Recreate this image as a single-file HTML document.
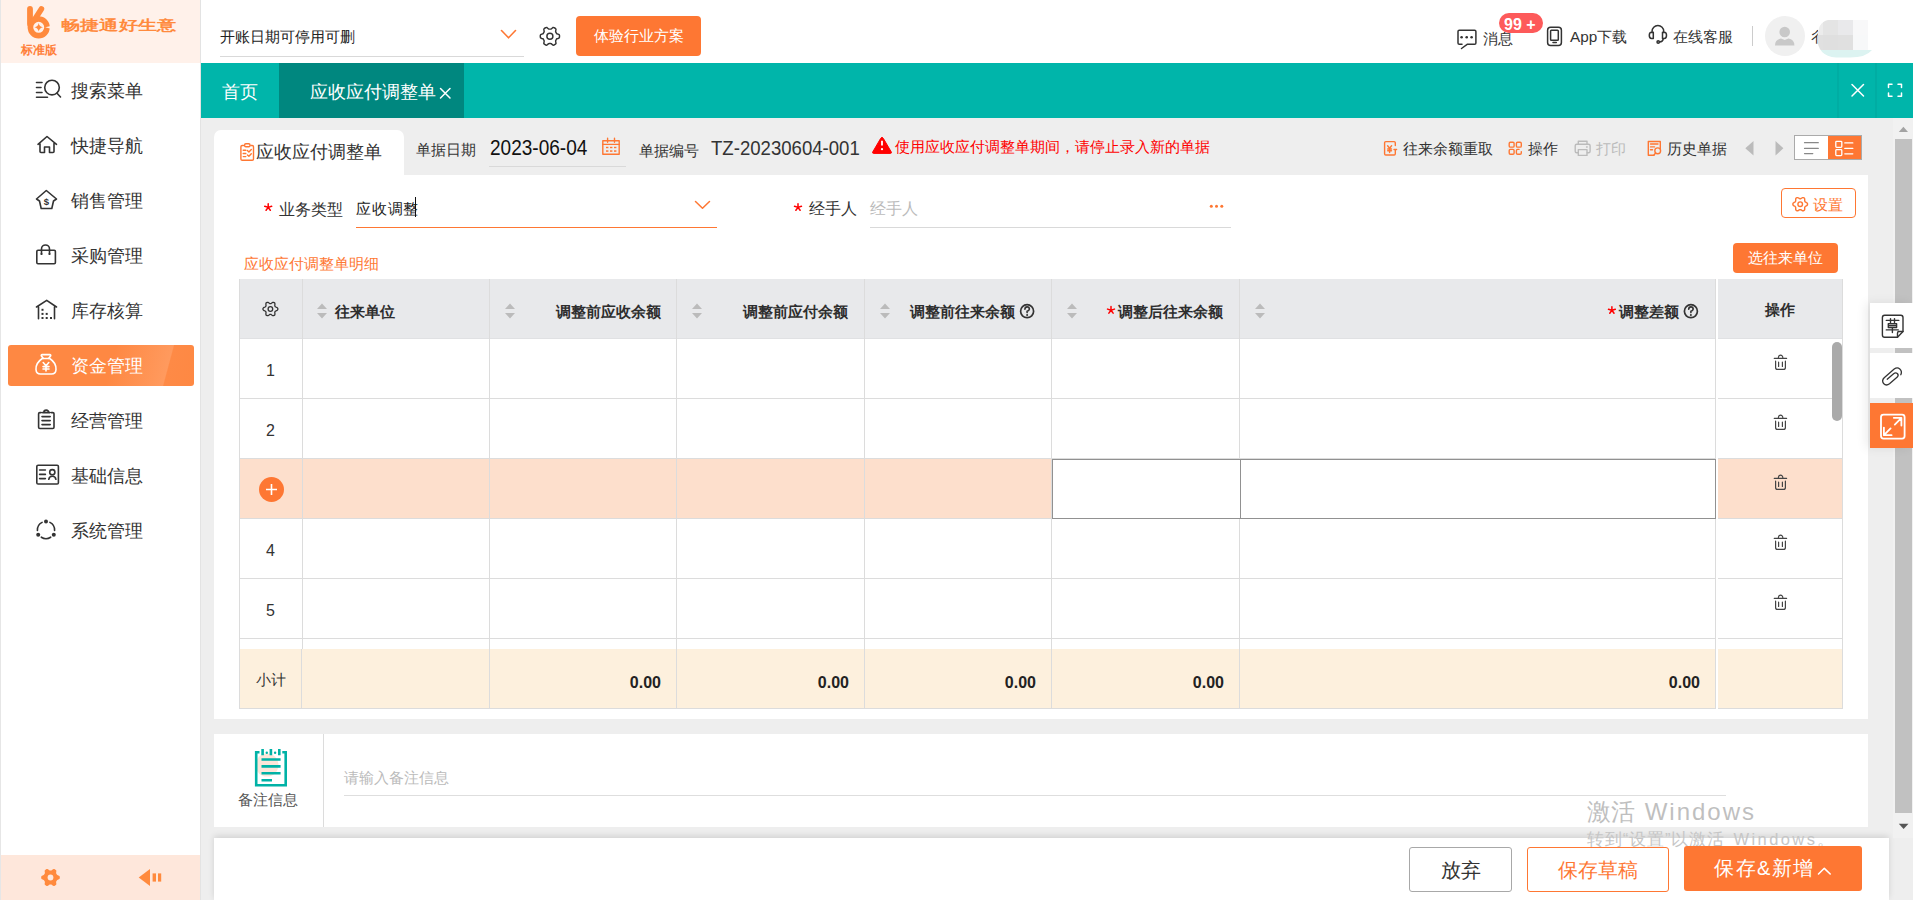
<!DOCTYPE html>
<html><head><meta charset="utf-8">
<style>
*{box-sizing:border-box;margin:0;padding:0}
html,body{width:1913px;height:900px;overflow:hidden}
body{position:relative;background:#eeeeee;font-family:"Liberation Sans",sans-serif;color:#333}
.a{position:absolute;white-space:nowrap}
svg{position:absolute;overflow:visible}
.ov{pointer-events:none}
/* sidebar */
#side{left:0;top:0;width:201px;height:900px;background:#fff;border-right:1px solid #e3e3e3;border-left:1px solid #e6e6e6}
#logo{left:1px;top:0;width:199px;height:63px;background:#fff1ea}
.mi{left:71px;font-size:18px;line-height:20px;color:#333;margin-top:1px}
#act{left:8px;top:345px;width:186px;height:41px;border-radius:3px;background:linear-gradient(105deg,#fe8843 0%,#fe8843 55%,#ff9a5e 84%,#fe8a46 84.6%,#fe8843 100%)}
#sbot{left:1px;top:855px;width:199px;height:45px;background:#fee7db}
/* header */
#hdr{left:201px;top:0;width:1712px;height:63px;background:#fff}
#tabs{left:201px;top:63px;width:1712px;height:55px;background:#00b5aa}
#atab{left:279px;top:63px;width:185px;height:55px;background:#00877f}
.tt{font-size:18px;line-height:20px;color:#fff;margin-top:1px}

.t15{font-size:15px;line-height:20px}
.lbl{font-size:16px;line-height:20px;color:#333}
.red{color:#f00}
.or{color:#fe7733}
.cw{background:#fff}
.th{font-size:15px;line-height:20px;font-weight:bold;color:#2e2e2e}
.vl{width:1px;background:#dcdcdc}
.hl{height:1px;background:#dcdcdc}
.num{font-size:16px;line-height:20px;font-weight:bold;color:#222;font-family:"Liberation Sans",sans-serif}
.btn{border-radius:4px;text-align:center}
</style></head><body>

<!-- SIDEBAR -->
<div class="a" id="side"></div>
<div class="a" id="logo"></div>
<!-- logo mark -->
<svg style="left:0;top:0" width="60" height="42" viewBox="0 0 60 42">
  <path d="M30 8.9V24" stroke="#ff8a3d" stroke-width="5.8" stroke-linecap="round" fill="none"/>
  <path d="M41.4 8.9L35 19" stroke="#ff8a3d" stroke-width="5.6" stroke-linecap="round" fill="none"/>
  <circle cx="38.7" cy="27.3" r="8.3" stroke="#ff8a3d" stroke-width="5.6" fill="none"/>
  <path d="M45.2 27.3L50.8 25.9V28.7Z" fill="#fff1ea"/>
  <path d="M38.7 23Q39.3 26.7 43 27.3Q39.3 27.9 38.7 31.6Q38.1 27.9 34.4 27.3Q38.1 26.7 38.7 23Z" fill="#ff8a3d"/>
</svg>
<div class="a" style="left:61px;top:16px;font-size:14px;line-height:18px;font-weight:bold;color:#ff8a3d;transform-origin:0 0;transform:scaleX(1.37)">畅捷通好生意</div>
<div class="a" style="left:21px;top:42px;font-size:12px;line-height:16px;font-weight:bold;color:#ff7f3a">标准版</div>

<!-- menu -->
<div class="a" id="act"></div>
<div class="a mi" style="top:80px">搜索菜单</div>
<div class="a mi" style="top:135px">快捷导航</div>
<div class="a mi" style="top:190px">销售管理</div>
<div class="a mi" style="top:245px">采购管理</div>
<div class="a mi" style="top:300px">库存核算</div>
<div class="a mi" style="top:355px;color:#fff">资金管理</div>
<div class="a mi" style="top:410px">经营管理</div>
<div class="a mi" style="top:465px">基础信息</div>
<div class="a mi" style="top:520px">系统管理</div>

<div class="a" id="sbot"></div>

<!-- HEADER -->
<div class="a" id="hdr"></div>
<div class="a" style="left:220px;top:27px;font-size:15px;line-height:20px;color:#222">开账日期可停用可删</div>
<div class="a" style="left:220px;top:56px;width:304px;height:1px;background:#d9d9d9"></div>
<div class="a" style="left:576px;top:16px;width:125px;height:40px;border-radius:4px;background:#fe7733"></div>
<div class="a" style="left:576px;top:16px;width:125px;line-height:40px;text-align:center;font-size:15px;color:#fff">体验行业方案</div>

<div class="a" style="left:1483px;top:29px;font-size:15px;line-height:20px;color:#333">消息</div>
<div class="a" style="left:1499px;top:13px;width:44px;height:20px;border-radius:10px;background:#fd5a5a"></div>
<div class="a" style="left:1504px;top:15px;line-height:20px;font-size:16px;font-weight:bold;color:#fff">99 +</div>
<div class="a" style="left:1570px;top:27px;font-size:15.3px;line-height:20px;color:#333">App下载</div>
<div class="a" style="left:1673px;top:27px;font-size:15px;line-height:20px;color:#333">在线客服</div>
<div class="a" style="left:1752px;top:26px;width:1px;height:20px;background:#ccc"></div>
<div class="a" style="left:1765px;top:16px;width:40px;height:40px;border-radius:20px;background:#f0f0f0"></div>
<div class="a" style="left:1811px;top:27px;width:7px;overflow:hidden;font-size:15px;line-height:20px;color:#333">彳</div>

<!-- TABS -->
<div class="a" id="tabs"></div>
<div class="a" id="atab"></div>
<div class="a tt" style="left:222px;top:81px">首页</div>
<div class="a tt" style="left:310px;top:81px;font-size:17.6px">应收应付调整单</div>


<!-- CONTENT -->
<div class="a" style="left:214px;top:130px;width:190px;height:46px;background:#fff;border-radius:7px 7px 0 0"></div>
<div class="a" style="left:214px;top:175px;width:1654px;height:544px;background:#fff"></div>
<div class="a" style="left:256px;top:142px;font-size:17.7px;line-height:20px;color:#333">应收应付调整单</div>
<div class="a t15" style="left:416px;top:140px;color:#333">单据日期</div>
<div class="a" style="left:490px;top:137px;font-size:21.5px;line-height:22px;color:#111;transform-origin:0 0;transform:scaleX(0.885)">2023-06-04</div>
<div class="a hl" style="left:489px;top:166px;width:137px;background:#d9d9d9"></div>
<div class="a t15" style="left:639px;top:141px;color:#333">单据编号</div>
<div class="a" style="left:711px;top:137px;font-size:21px;line-height:22px;color:#333;transform-origin:0 0;transform:scaleX(0.885)">TZ-20230604-001</div>
<div class="a t15 red" style="left:895px;top:137px">使用应收应付调整单期间，请停止录入新的单据</div>
<div class="a t15" style="left:1403px;top:139px;color:#333">往来余额重取</div>
<div class="a t15" style="left:1528px;top:139px;color:#333">操作</div>
<div class="a t15" style="left:1596px;top:139px;color:#bbb">打印</div>
<div class="a t15" style="left:1667px;top:139px;color:#333">历史单据</div>
<div class="a" style="left:1794px;top:135px;width:68px;height:25px;border:1px solid #aaa;background:#fff"></div>
<div class="a" style="left:1828px;top:136px;width:33px;height:23px;background:#fe7733"></div>

<!-- form row -->
<div class="a lbl" style="left:279px;top:200px">业务类型</div>
<div class="a" style="left:356px;top:199px;font-size:15.3px;line-height:20px;color:#222;letter-spacing:0.8px">应收调整</div>
<div class="a" style="left:415px;top:197px;width:1px;height:20px;background:#111"></div>
<div class="a hl" style="left:356px;top:227px;width:361px;background:#fe7733"></div>
<div class="a lbl" style="left:809px;top:199px">经手人</div>
<div class="a" style="left:870px;top:199px;font-size:15.5px;line-height:20px;color:#bbb">经手人</div>
<div class="a hl" style="left:870px;top:227px;width:361px;background:#d9d9d9"></div>
<div class="a btn" style="left:1781px;top:188px;width:75px;height:30px;border:1px solid #fe7733"></div>
<div class="a or" style="left:1813px;top:195px;font-size:15px;line-height:20px">设置</div>

<div class="a t15 or" style="left:244px;top:254px">应收应付调整单明细</div>
<div class="a btn" style="left:1733px;top:243px;width:105px;height:30px;background:#fe7733"></div>
<div class="a t15" style="left:1733px;top:248px;width:105px;text-align:center;color:#fff">选往来单位</div>
<!-- TABLE -->
<div class="a" style="left:239px;top:279px;width:1604px;height:60px;background:#e8e9eb"></div>
<div class="a" style="left:240px;top:459px;width:1475px;height:59px;background:#fddfcc"></div>
<div class="a" style="left:1718px;top:459px;width:124px;height:59px;background:#fddfcc"></div>
<div class="a" style="left:239px;top:649px;width:1477px;height:60px;background:#fdf0dd"></div>
<div class="a" style="left:1718px;top:649px;width:125px;height:60px;background:#fdf0dd"></div>
<div class="a hl" style="left:239px;top:338px;width:1604px;background:#e0e1e3"></div>
<div class="a hl" style="left:239px;top:398px;width:1477px"></div>
<div class="a hl" style="left:1718px;top:398px;width:125px"></div>
<div class="a hl" style="left:239px;top:458px;width:1477px"></div>
<div class="a hl" style="left:1718px;top:458px;width:125px"></div>
<div class="a hl" style="left:239px;top:518px;width:1477px"></div>
<div class="a hl" style="left:1718px;top:518px;width:125px"></div>
<div class="a hl" style="left:239px;top:578px;width:1477px"></div>
<div class="a hl" style="left:1718px;top:578px;width:125px"></div>
<div class="a hl" style="left:239px;top:638px;width:1477px"></div>
<div class="a hl" style="left:1718px;top:638px;width:125px"></div>
<div class="a hl" style="left:239px;top:708px;width:1477px"></div>
<div class="a hl" style="left:1718px;top:708px;width:125px"></div>
<div class="a vl" style="left:239px;top:279px;height:430px"></div>
<div class="a vl" style="left:302px;top:279px;height:370px"></div><div class="a vl" style="left:301px;top:649px;height:60px"></div>
<div class="a vl" style="left:489px;top:279px;height:430px"></div>
<div class="a vl" style="left:676px;top:279px;height:430px"></div>
<div class="a vl" style="left:864px;top:279px;height:430px"></div>
<div class="a vl" style="left:1051px;top:279px;height:430px"></div>
<div class="a vl" style="left:1239px;top:279px;height:430px"></div>
<div class="a vl" style="left:1715px;top:279px;height:430px"></div>
<div class="a vl" style="left:1842px;top:279px;height:430px"></div>
<div class="a" style="left:1716px;top:279px;width:2px;height:430px;background:#fff"></div>
<div class="a" style="left:1052px;top:459px;width:189px;height:60px;border:1px solid #919191;background:#fff"></div>
<div class="a" style="left:1241px;top:459px;width:475px;height:60px;border:1px solid #919191;border-left:none;background:#fff"></div>
<div class="a" style="left:239px;top:361px;width:63px;text-align:center;font-size:16px;line-height:20px;color:#333">1</div>
<div class="a" style="left:239px;top:421px;width:63px;text-align:center;font-size:16px;line-height:20px;color:#333">2</div>
<div class="a" style="left:239px;top:541px;width:63px;text-align:center;font-size:16px;line-height:20px;color:#333">4</div>
<div class="a" style="left:239px;top:601px;width:63px;text-align:center;font-size:16px;line-height:20px;color:#333">5</div>
<div class="a" style="left:239px;top:670px;width:63px;text-align:center;font-size:15px;line-height:20px;color:#333">小计</div>
<div class="a" style="left:259px;top:477px;width:25px;height:25px;border-radius:13px;background:#fe7733"></div>
<div class="a th" style="left:335px;top:302px">往来单位</div>
<div class="a th" style="left:489px;top:302px;width:172px;text-align:right">调整前应收余额</div>
<div class="a th" style="left:676px;top:302px;width:172px;text-align:right">调整前应付余额</div>
<div class="a th" style="left:864px;top:302px;width:151px;text-align:right">调整前往来余额</div>
<div class="a th" style="left:1051px;top:302px;width:172px;text-align:right">调整后往来余额</div>
<div class="a th" style="left:1239px;top:302px;width:460px;text-align:right;padding-right:20px">调整差额</div>
<div class="a th" style="left:1718px;top:300px;width:124px;text-align:center">操作</div>
<div class="a num" style="left:489px;top:673px;width:187px;text-align:right;padding-right:15px">0.00</div>
<div class="a num" style="left:676px;top:673px;width:188px;text-align:right;padding-right:15px">0.00</div>
<div class="a num" style="left:864px;top:673px;width:187px;text-align:right;padding-right:15px">0.00</div>
<div class="a num" style="left:1051px;top:673px;width:188px;text-align:right;padding-right:15px">0.00</div>
<div class="a num" style="left:1239px;top:673px;width:476px;text-align:right;padding-right:15px">0.00</div>
<!-- REMARK -->
<div class="a" style="left:214px;top:734px;width:1654px;height:93px;background:#fff"></div>
<div class="a vl" style="left:323px;top:734px;height:93px"></div>
<div class="a" style="left:238px;top:790px;font-size:15px;line-height:20px;color:#555">备注信息</div>
<div class="a" style="left:344px;top:768px;font-size:15px;line-height:20px;color:#bbb">请输入备注信息</div>
<div class="a hl" style="left:344px;top:795px;width:1382px;background:#dedede"></div>
<!-- FOOTER -->
<div class="a" style="left:214px;top:838px;width:1675px;height:62px;background:#fff;box-shadow:0 -2px 6px rgba(0,0,0,0.12)"></div>
<div class="a" style="left:1587px;top:797px;font-size:24px;line-height:30px;color:#bfbfbf">激活 <span style="letter-spacing:2px;margin-left:3px">Windows</span></div>
<div class="a" style="left:1587px;top:828px;font-size:16.5px;line-height:22px;color:#c6c6c6;letter-spacing:0.9px">转到“设置”以激活 <span style="letter-spacing:2.4px;margin-left:3px">Windows</span>。</div>
<div class="a btn" style="left:1409px;top:847px;width:103px;height:45px;border:1px solid #a8a8a8;border-radius:3px"></div>
<div class="a" style="left:1409px;top:859px;width:103px;text-align:center;font-size:20px;line-height:22px;color:#333">放弃</div>
<div class="a btn" style="left:1527px;top:847px;width:142px;height:45px;border:1px solid #fe7733;border-radius:3px"></div>
<div class="a" style="left:1527px;top:859px;width:142px;text-align:center;font-size:20px;line-height:22px;color:#fe7733">保存草稿</div>
<div class="a btn" style="left:1684px;top:846px;width:178px;height:45px;background:#fe7733;border-radius:3px"></div>
<div class="a" style="left:1714px;top:857px;font-size:20px;line-height:22px;color:#fff;letter-spacing:1.5px">保存&amp;新增</div>
<div class="a" style="left:1893px;top:118px;width:20px;height:720px;background:#f1f1f1"></div>
<div class="a" style="left:1895px;top:139px;width:17px;height:674px;background:#c1c1c1"></div>
<div class="a" style="left:1870px;top:303px;width:43px;height:145px;box-shadow:-4px 0 10px rgba(0,0,0,0.08)"></div>
<div class="a" style="left:1870px;top:303px;width:43px;height:45px;background:#fff"></div>
<div class="a" style="left:1870px;top:353px;width:43px;height:45px;background:#fff"></div>
<div class="a" style="left:1870px;top:403px;width:43px;height:45px;background:#fe7733"></div>
<div class="a" style="left:1832px;top:342px;width:10px;height:79px;border-radius:5px;background:#aaa"></div>
<!--OVL--><svg class="ov" style="left:0;top:0" width="1913" height="900" viewBox="0 0 1913 900" fill="none" stroke-linecap="round" stroke-linejoin="round">
<g stroke="#333" stroke-width="1.6">
<path d="M36.5 82.5H42M36.5 87.5H41M36.5 92.5H42M36.5 97.3H47.5"/><circle cx="52" cy="87.6" r="7.3"/><path d="M57 93.2L60.5 97"/>
<path transform="translate(0,55)" d="M38 89.3L47 81.5L56.5 89.3M40 88.5V96.5Q40 97.5 41 97.5H44.5V92H49.5V97.5H53Q54 97.5 54 96.5V88.5"/>
<path transform="translate(0,110)" d="M46.3 80.5L56.5 89L53.5 91L51.8 98.5H41.2L39.5 91L36.5 89Z"/>
</g>
<text x="46.3" y="205.2" font-size="9.5" font-weight="bold" fill="#333" text-anchor="middle" font-family="Liberation Sans">$</text>
<g stroke="#333" stroke-width="1.6">
<rect x="36.8" y="250.2" width="18.6" height="13.6" rx="1.2"/><path d="M41.5 254V249A4 4 0 0 1 49.5 249V254"/>
<path d="M36.5 307L46.7 300.3L56.5 307M38.5 307V318.8M54.5 307V318.8"/>
</g>
<g fill="#333"><circle cx="41.5" cy="254" r="1.1"/><circle cx="49.5" cy="254" r="1.1"/>
<rect x="41.5" y="308.8" width="2" height="2"/>
<rect x="41.5" y="312.9" width="2" height="2"/>
<rect x="45.7" y="312.9" width="2" height="2"/>
<rect x="41.5" y="317.0" width="2" height="2"/>
<rect x="45.7" y="317.0" width="2" height="2"/>
<rect x="50.0" y="317.0" width="2" height="2"/>
</g>
<g stroke="#fff" stroke-width="1.6"><path d="M43.2 358.3L41.3 355.8Q41 354.6 42.2 354.6H49.8Q51 354.6 50.7 355.8L48.8 358.3"/><path d="M42.3 358.5H49.7Q56.3 362.8 56 369.5Q55.8 374 51.5 374H40.5Q36.2 374 36 369.5Q35.7 362.8 42.3 358.5Z"/><path d="M43.2 362.5L46 365.8L48.8 362.5M46 365.8V371M43 366.6H49M43 369H49"/></g>
<g stroke="#333" stroke-width="1.6">
<path d="M41.2 412.6H39.8Q38.6 412.6 38.6 413.8V427.3Q38.6 428.5 39.8 428.5H52.8Q54 428.5 54 427.3V413.8Q54 412.6 52.8 412.6H51.4M42.5 412.6H50M43.8 412.6A2.5 2.5 0 0 1 48.8 412.6M42 416.6H50.2M42 420.6H50.2M42 424.6H50.2"/>
<rect x="36.8" y="465.2" width="21.6" height="18.8" rx="1.3"/><path d="M39.6 470H45.4M39.6 474.4H45.4M39.6 478.6H45.4"/><circle cx="52.3" cy="472.2" r="2.6"/><path d="M48.8 479.3A3.6 3.6 0 0 1 55.9 479.3"/>
<path d="M49.90 522.34 A8.6 8.6 0 0 1 54.59 530.45 M50.68 537.21 A8.6 8.6 0 0 1 41.32 537.21 M37.41 530.45 A8.6 8.6 0 0 1 42.10 522.34"/>
</g>
<g fill="#333"><circle cx="46" cy="521.5" r="2"/><circle cx="38.2" cy="534.7" r="2"/><circle cx="53.8" cy="534.7" r="2"/></g>
<path d="M59.8 877.5L59.8 878.3L59.4 879.1L58.4 879.6L57.3 880.0L56.8 880.5L56.6 881.0L56.2 881.5L56.1 882.2L56.3 883.3L56.3 884.4L55.8 885.1L55.1 885.6L54.4 885.9L53.6 886.0L52.6 885.4L51.8 884.7L51.1 884.5L50.5 884.5L49.9 884.5L49.2 884.7L48.4 885.4L47.4 886.0L46.6 885.9L45.9 885.6L45.2 885.1L44.7 884.4L44.7 883.3L44.9 882.2L44.8 881.5L44.4 881.0L44.2 880.5L43.7 880.0L42.6 879.6L41.6 879.1L41.2 878.3L41.2 877.5L41.2 876.7L41.6 875.9L42.6 875.4L43.7 875.0L44.2 874.5L44.4 874.0L44.8 873.5L44.9 872.8L44.7 871.7L44.7 870.6L45.2 869.9L45.8 869.4L46.6 869.1L47.4 869.0L48.4 869.6L49.2 870.3L49.9 870.5L50.5 870.5L51.1 870.5L51.8 870.3L52.6 869.6L53.6 869.0L54.4 869.1L55.1 869.4L55.8 869.9L56.3 870.6L56.3 871.7L56.1 872.8L56.2 873.5L56.6 874.0L56.8 874.5L57.3 875.0L58.4 875.4L59.4 875.9L59.8 876.7Z" fill="#ff8a3d"/><circle cx="50.5" cy="877.5" r="2.9" fill="#fee7db"/>
<path d="M150 869L138.7 877.5L150 886Z" fill="#ff8a3d"/><rect x="152.6" y="873.4" width="3.4" height="8.2" fill="#ff8a3d"/><rect x="158" y="873.4" width="3.2" height="8.2" fill="#ff8a3d"/>
<path d="M501.5 30.5L508.5 37.8L515.5 30.5" stroke="#fe7733" stroke-width="1.6"/>
<path d="M559.5 36.3L559.5 37.1L559.2 37.9L558.0 38.5L556.8 38.8L556.4 39.3L556.1 39.9L555.8 40.4L555.6 41.0L555.8 42.2L556.0 43.5L555.4 44.2L554.7 44.6L554.0 45.0L553.1 45.2L552.1 44.4L551.2 43.6L550.5 43.5L549.9 43.5L549.3 43.5L548.6 43.6L547.7 44.4L546.7 45.2L545.8 45.0L545.1 44.6L544.4 44.2L543.8 43.5L544.0 42.2L544.2 41.0L544.0 40.4L543.7 39.9L543.4 39.3L543.0 38.8L541.8 38.5L540.6 37.9L540.3 37.1L540.3 36.3L540.3 35.5L540.6 34.7L541.8 34.1L543.0 33.8L543.4 33.3L543.7 32.7L544.0 32.2L544.2 31.6L544.0 30.4L543.8 29.1L544.4 28.4L545.1 28.0L545.8 27.6L546.7 27.4L547.7 28.2L548.6 29.0L549.3 29.1L549.9 29.1L550.5 29.1L551.2 29.0L552.1 28.2L553.1 27.4L554.0 27.6L554.7 28.0L555.4 28.4L556.0 29.1L555.8 30.4L555.6 31.6L555.8 32.2L556.1 32.7L556.4 33.3L556.8 33.8L558.0 34.1L559.2 34.7L559.5 35.5Z" stroke="#333" stroke-width="1.45"/><circle cx="549.9" cy="36.3" r="3.0" stroke="#333" stroke-width="1.45"/>
<g stroke="#333" stroke-width="1.5"><path d="M1462 44.2H1459.3Q1458 44.2 1458 42.9V31.5Q1458 30.2 1459.3 30.2H1474.6Q1475.9 30.2 1475.9 31.5V42.9Q1475.9 44.2 1474.6 44.2H1467.5L1461.5 48.5"/>
<rect x="1547.6" y="27.2" width="13.8" height="18.4" rx="3"/><rect x="1550.6" y="30.3" width="7.7" height="10" rx="0.8"/><path d="M1553 42.6H1556.3"/>
<path d="M1652 32.5V31.5A5.9 5.9 0 0 1 1663.8 31.5V32.5M1651.5 32.2H1653.3V38.5H1651.5Q1649.3 38.5 1649.3 35.3Q1649.3 32.2 1651.5 32.2ZM1664.3 32.2H1662.5V38.5H1664.3Q1666.5 38.5 1666.5 35.3Q1666.5 32.2 1664.3 32.2ZM1663.3 38.8Q1662.8 41.8 1659.5 42"/><circle cx="1658.2" cy="42" r="1.2"/>
</g>
<g fill="#333"><circle cx="1461.6" cy="37.3" r="1.3"/><circle cx="1466.7" cy="37.3" r="1.3"/><circle cx="1471.6" cy="37.3" r="1.3"/></g>
<g fill="#c8c8c8"><circle cx="1784.7" cy="32" r="5.3"/><path d="M1775 45.5Q1775 39.5 1781 38.5L1784.7 40L1788.4 38.5Q1794.4 39.5 1794.4 45.5Z"/></g>
<g stroke="none"><clipPath id="mc"><path d="M1828 20H1868V50H1872Q1866 57.5 1850 57.5H1836Q1817.5 56 1817.5 38.5Q1817.5 22 1828 20Z"/></clipPath><g clip-path="url(#mc)"><rect x="1815" y="20" width="8" height="15" fill="#ececec"/><rect x="1815" y="35" width="8" height="15" fill="#e0e0e0"/><rect x="1823" y="20" width="15" height="15" fill="#e4e4e4"/><rect x="1838" y="20" width="15" height="15" fill="#e9e9eb"/><rect x="1853" y="20" width="15" height="15" fill="#f8f8f9"/><rect x="1823" y="35" width="15" height="15" fill="#dfdfdf"/><rect x="1838" y="35" width="15" height="15" fill="#e0e0e0"/><rect x="1853" y="35" width="15" height="15" fill="#f7f8f9"/><rect x="1815" y="50" width="60" height="10" fill="#dcf3f1"/></g></g>
<g stroke="#fff" stroke-width="1.5"><path d="M440.5 88.5L450 98M450 88.5L440.5 98"/><path d="M1852 84.5L1863.5 96M1863.5 84.5L1852 96"/><path d="M1888.5 87.5V84.2H1892M1898 84.2H1901.5V87.5M1901.5 93V96.3H1898M1892 96.3H1888.5V93"/></g>
<g stroke="none"><rect x="1837" y="63" width="2" height="55" fill="#00a99e" opacity="0.6"/><rect x="1875" y="63" width="2" height="55" fill="#00a99e" opacity="0.6"/></g>
<g stroke="#fe7733" stroke-width="1.4">
<path d="M243.5 145.5H242.2Q240.9 145.5 240.9 146.8V158.9Q240.9 160.2 242.2 160.2H252.2Q253.5 160.2 253.5 158.9V146.8Q253.5 145.5 252.2 145.5H250.9"/><rect x="244.6" y="143.8" width="5.4" height="3" rx="1.2"/><path d="M243.2 150.3H245.8M243.2 153.5H245.8M243.2 156.6H245.8M247.4 150.6L248.9 152L251.3 149.5M247.4 154.9L248.9 156.3L251.3 153.8"/>
<rect x="602.8" y="140.8" width="16.4" height="13.5"/><path d="M602.8 144.4H619.2M607.6 138.3V142.3M614.5 138.3V142.3"/></g><g fill="#fe7733"><rect x="606" y="146.8" width="2.4" height="1.4"/><rect x="610" y="146.8" width="2.4" height="1.4"/><rect x="614" y="146.8" width="2.4" height="1.4"/><rect x="606" y="150.3" width="2.4" height="1.5"/><rect x="610" y="150.3" width="2.4" height="1.5"/><rect x="614" y="150.3" width="2.4" height="1.5"/></g><g stroke="#fe7733" stroke-width="1.4">
<path d="M1395.3 145.6V142.8Q1395.3 141.6 1394.1 141.6H1385.8Q1384.6 141.6 1384.6 142.8V153.8Q1384.6 155 1385.8 155H1394.1Q1395.3 155 1395.3 153.8V149.8M1394 149.5H1396.6M1387.6 145.8L1389.6 148.3L1391.6 145.8M1389.6 148.3V152.6M1387.7 149H1391.5M1387.7 150.8H1391.5"/>
<rect x="1509.2" y="142.2" width="4.9" height="4.9" rx="1.2"/><rect x="1516.4" y="142.2" width="4.9" height="4.9" rx="1.2"/><rect x="1509.2" y="149.4" width="4.9" height="4.9" rx="1.2"/><path d="M1521.3 151.6V153Q1521.3 154.3 1520 154.3H1517.7Q1516.4 154.3 1516.4 153V150.7Q1516.4 149.4 1517.7 149.4H1519"/>
<path d="M1654 155.3H1648.3V141.5H1660.3V149M1650.5 144H1658M1650.5 146.9H1654.5M1650.5 149.8H1652.5"/><circle cx="1657.7" cy="150.8" r="2.9"/><path d="M1655.6 153L1654 155"/>
<path d="M1800.2 204.2m0 0" /><path d="M1807.5 204.2L1807.5 204.8L1807.1 205.4L1806.4 205.9L1805.7 206.2L1805.2 206.5L1805.0 206.9L1804.7 207.4L1804.7 208.0L1804.7 208.7L1804.7 209.5L1804.4 210.2L1803.9 210.5L1803.3 210.8L1802.6 210.8L1801.9 210.4L1801.2 209.9L1800.7 209.7L1800.2 209.7L1799.7 209.7L1799.2 209.9L1798.5 210.4L1797.8 210.8L1797.1 210.8L1796.5 210.5L1796.0 210.2L1795.7 209.5L1795.7 208.7L1795.7 208.0L1795.7 207.4L1795.4 206.9L1795.2 206.5L1794.7 206.2L1794.0 205.9L1793.3 205.4L1792.9 204.8L1792.9 204.2L1792.9 203.6L1793.3 203.0L1794.0 202.5L1794.7 202.2L1795.2 201.9L1795.4 201.4L1795.7 201.0L1795.7 200.4L1795.7 199.7L1795.7 198.8L1796.0 198.2L1796.5 197.9L1797.1 197.6L1797.8 197.6L1798.5 198.0L1799.2 198.4L1799.7 198.7L1800.2 198.7L1800.7 198.7L1801.2 198.4L1801.9 198.0L1802.6 197.6L1803.3 197.6L1803.9 197.9L1804.4 198.2L1804.7 198.8L1804.7 199.7L1804.7 200.4L1804.7 201.0L1805.0 201.4L1805.2 201.9L1805.7 202.2L1806.4 202.5L1807.1 203.0L1807.5 203.6Z"/><circle cx="1800.2" cy="204.2" r="2.3"/>
</g>
<path d="M882 137.5Q882.8 137.5 883.4 138.5L891.3 152Q891.8 153.4 890.3 153.4H873.7Q872.2 153.4 872.7 152L880.6 138.5Q881.2 137.5 882 137.5Z" fill="#f00" stroke="#f00" stroke-width="1"/><path d="M882 140.8V145.6" stroke="#fff" stroke-width="1.8" stroke-linecap="butt"/><circle cx="882" cy="149.2" r="1.1" fill="#fff"/>
<g stroke="#bbb" stroke-width="1.4"><path d="M1578.3 144V141.3H1587V144M1578 152.7H1576.7Q1575.2 152.7 1575.2 151.2V145.7Q1575.2 144.2 1576.7 144.2H1588.6Q1590.1 144.2 1590.1 145.7V151.2Q1590.1 152.7 1588.6 152.7H1587.3"/><rect x="1578.3" y="149.6" width="8.7" height="5.8"/><path d="M1586.6 147H1587.2"/></g>
<path d="M1753.5 141V155.6L1745.3 148.3Z" fill="#bbb"/><path d="M1775.5 141V155.6L1783.4 148.3Z" fill="#bbb"/>
<path d="M1804.5 142.7H1818.3M1804.5 148.4H1818.3M1804.5 153.6H1812.8" stroke="#888" stroke-width="1.2"/>
<g stroke="#fff" stroke-width="1.3"><rect x="1835.8" y="141.3" width="6" height="6" rx="0.8"/><rect x="1835.8" y="149.6" width="6" height="6" rx="0.8"/><path d="M1844.8 142.9H1852.8M1844.8 148.4H1852.8M1844.8 153.8H1852.8"/></g>
<g fill="#fe7733"><circle cx="1211.3" cy="206.3" r="1.5"/><circle cx="1216.5" cy="206.3" r="1.5"/><circle cx="1221.8" cy="206.3" r="1.5"/></g>
<path d="M695.5 201.5L702.5 208.3L709.5 201.5" stroke="#fe7733" stroke-width="1.5"/>
<path d="M277.8 309.0L277.8 309.6L277.3 310.2L276.6 310.7L275.8 311.0L275.3 311.3L275.1 311.7L274.8 312.1L274.8 312.7L274.9 313.5L274.9 314.4L274.7 315.1L274.1 315.4L273.5 315.7L272.8 315.6L272.1 315.2L271.4 314.7L270.9 314.4L270.4 314.4L269.9 314.4L269.4 314.7L268.7 315.2L268.0 315.6L267.3 315.7L266.7 315.4L266.1 315.1L265.9 314.4L265.9 313.5L266.0 312.7L266.0 312.1L265.7 311.7L265.5 311.3L265.0 311.0L264.2 310.7L263.5 310.2L263.0 309.6L263.0 309.0L263.0 308.4L263.5 307.8L264.2 307.3L265.0 307.0L265.5 306.7L265.7 306.3L266.0 305.9L266.0 305.3L265.9 304.5L265.9 303.6L266.1 302.9L266.7 302.6L267.3 302.3L268.0 302.4L268.7 302.8L269.4 303.3L269.9 303.6L270.4 303.6L270.9 303.6L271.4 303.3L272.1 302.8L272.8 302.4L273.5 302.3L274.1 302.6L274.7 302.9L274.9 303.6L274.9 304.5L274.8 305.3L274.8 305.9L275.1 306.3L275.3 306.7L275.8 307.0L276.6 307.3L277.3 307.8L277.8 308.4Z" stroke="#333" stroke-width="1.3"/><circle cx="270.4" cy="309" r="2.3" stroke="#333" stroke-width="1.3"/>
<path d="M322.0 303.5L327.0 309H317.0ZM317.0 313L322.0 318.5L327.0 313Z" fill="#bbb"/>
<path d="M510.0 303.5L515.0 309H505.0ZM505.0 313L510.0 318.5L515.0 313Z" fill="#bbb"/>
<path d="M697.0 303.5L702.0 309H692.0ZM692.0 313L697.0 318.5L702.0 313Z" fill="#bbb"/>
<path d="M885.0 303.5L890.0 309H880.0ZM880.0 313L885.0 318.5L890.0 313Z" fill="#bbb"/>
<path d="M1072.0 303.5L1077.0 309H1067.0ZM1067.0 313L1072.0 318.5L1077.0 313Z" fill="#bbb"/>
<path d="M1260.0 303.5L1265.0 309H1255.0ZM1255.0 313L1260.0 318.5L1265.0 313Z" fill="#bbb"/>
<circle cx="1027.1" cy="311.2" r="6.5" stroke="#333" stroke-width="1.7"/><path d="M1024.9 309.3Q1025.0 306.9 1027.1 306.9Q1029.3 306.9 1029.4 309.1Q1029.0 310.6 1027.1 311.3V312.6" stroke="#333" stroke-width="1.6"/><circle cx="1027.1" cy="315.1" r="1" fill="#333"/>
<circle cx="1690.9" cy="311.2" r="6.5" stroke="#333" stroke-width="1.7"/><path d="M1688.7 309.3Q1688.8 306.9 1690.9 306.9Q1693.1 306.9 1693.2 309.1Q1692.8 310.6 1690.9 311.3V312.6" stroke="#333" stroke-width="1.6"/><circle cx="1690.9" cy="315.1" r="1" fill="#333"/>
<g stroke="#444" stroke-width="1.2"><path d="M1774.3 358.4H1786.6M1778.4 358.4V357.4A2.2 2.2 0 0 1 1782.8 357.4V358.4M1775.6 361.0V367.4Q1775.6 369.4 1777.6 369.4H1783.4Q1785.4 369.4 1785.4 367.4V361.0M1778.6 362.2V366.4M1782.4 362.2V366.4"/></g>
<g stroke="#444" stroke-width="1.2"><path d="M1774.3 418.4H1786.6M1778.4 418.4V417.4A2.2 2.2 0 0 1 1782.8 417.4V418.4M1775.6 421.0V427.4Q1775.6 429.4 1777.6 429.4H1783.4Q1785.4 429.4 1785.4 427.4V421.0M1778.6 422.2V426.4M1782.4 422.2V426.4"/></g>
<g stroke="#444" stroke-width="1.2"><path d="M1774.3 478.4H1786.6M1778.4 478.4V477.4A2.2 2.2 0 0 1 1782.8 477.4V478.4M1775.6 481.0V487.4Q1775.6 489.4 1777.6 489.4H1783.4Q1785.4 489.4 1785.4 487.4V481.0M1778.6 482.2V486.4M1782.4 482.2V486.4"/></g>
<g stroke="#444" stroke-width="1.2"><path d="M1774.3 538.4H1786.6M1778.4 538.4V537.4A2.2 2.2 0 0 1 1782.8 537.4V538.4M1775.6 541.0V547.4Q1775.6 549.4 1777.6 549.4H1783.4Q1785.4 549.4 1785.4 547.4V541.0M1778.6 542.2V546.4M1782.4 542.2V546.4"/></g>
<g stroke="#444" stroke-width="1.2"><path d="M1774.3 598.4H1786.6M1778.4 598.4V597.4A2.2 2.2 0 0 1 1782.8 597.4V598.4M1775.6 601.0V607.4Q1775.6 609.4 1777.6 609.4H1783.4Q1785.4 609.4 1785.4 607.4V601.0M1778.6 602.2V606.4M1782.4 602.2V606.4"/></g>
<path d="M271.5 484V495M266 489.5H277" stroke="#fff" stroke-width="1.6" stroke-linecap="butt"/>
<circle cx="267" cy="765" r="11.5" fill="#fde6d9" stroke="none"/>
<g stroke="#00b2a6" stroke-width="2.6" stroke-linecap="butt" stroke-linejoin="miter"><path d="M259.5 752.3H256.2V785.2H285.7V752.3H282.3"/><path d="M262.6 749V755.2M270.9 749V755.2M279.3 749V755.2"/><path d="M261.5 759.5H280.6M261.5 766.4H280.6M261.5 773.3H280.6M261.5 780.2H272"/></g><g fill="#00b2a6"><circle cx="266.8" cy="752.8" r="1.2"/><circle cx="275.1" cy="752.8" r="1.2"/></g>
<g stroke="#333" stroke-width="1.4"><path d="M1897.5 337.2H1884.6Q1882.4 337.2 1882.4 335V317.5Q1882.4 315.3 1884.6 315.3H1900.8Q1903 315.3 1903 317.5V331.5Z"/><path d="M1897.5 337.2V333Q1897.5 331.5 1899 331.5H1903"/><path d="M1886.3 320.4H1898.8M1890.5 318.6V322.4M1894.5 318.6V322.4M1888.3 323.8H1896.6V327.5H1888.3ZM1888.3 325.6H1896.6M1886.3 329.9H1898.3M1892.4 327.5V332.5"/></g>
<path d="M1900.8 374.7Q1902.4 371.3 1899.8 368.9Q1897.2 366.8 1894.2 369.1L1884.2 377.7Q1881.4 380.5 1883.6 383.5Q1886.2 386.3 1889.5 383.7L1897.3 377.1Q1899 375.2 1897.3 373.5Q1895.6 372.2 1893.6 373.7L1887.2 379.2" stroke="#333" stroke-width="1.3"/>
<g stroke="#fff" stroke-width="1.8"><rect x="1881" y="414.6" width="23.6" height="24" rx="2.5"/><path d="M1894.8 424.6L1901.2 418.2M1893.8 417.8H1901.4V425.6M1890.6 428.4L1884.2 434.8M1883.9 427.6V435.2H1891.6"/></g>
<path d="M1818.5 874L1824.3 868.3L1830.2 874" stroke="#fff" stroke-width="1.6"/>
<path d="M1898.8 132L1903.4 126.8L1908 132Z" fill="#a3a3a3" stroke="none"/><path d="M1898.8 823.7L1908.5 823.7L1903.6 829Z" fill="#555" stroke="none"/>
<path d="M268.20 207.40L268.20 203.80M268.20 207.40L271.62 206.29M268.20 207.40L270.32 210.31M268.20 207.40L266.08 210.31M268.20 207.40L264.78 206.29M798.00 207.40L798.00 203.80M798.00 207.40L801.42 206.29M798.00 207.40L800.12 210.31M798.00 207.40L795.88 210.31M798.00 207.40L794.58 206.29M1111.00 310.20L1111.00 306.60M1111.00 310.20L1114.42 309.09M1111.00 310.20L1113.12 313.11M1111.00 310.20L1108.88 313.11M1111.00 310.20L1107.58 309.09M1611.90 310.30L1611.90 306.70M1611.90 310.30L1615.32 309.19M1611.90 310.30L1614.02 313.21M1611.90 310.30L1609.78 313.21M1611.90 310.30L1608.48 309.19" stroke="#f00" stroke-width="1.5"/></svg><!--/OVL-->
</body></html>
